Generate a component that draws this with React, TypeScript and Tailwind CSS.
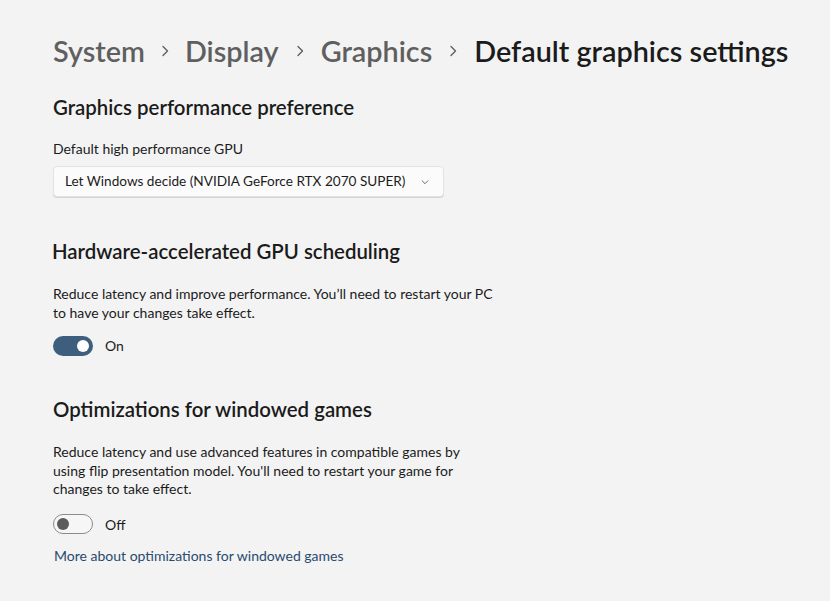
import React from "react";

const font = { fontFamily: '"Segoe UI Variable", "Segoe UI", Lato, sans-serif' };

const Chevron = ({ className }: { className?: string }) => (
  <svg viewBox="0 0 16 16" className={className} fill="none" stroke="currentColor" strokeWidth="1.4" strokeLinecap="round" strokeLinejoin="round">
    <path d="M6 3.5 10.5 8 6 12.5" />
  </svg>
);

const Toggle = ({ on }: { on: boolean }) =>
  on ? (
    <div className="flex h-5 w-10 items-center justify-end rounded-full bg-[#3d5f7d] px-1">
      <div className="h-3 w-3 rounded-full bg-white" />
    </div>
  ) : (
    <div className="flex h-5 w-10 items-center rounded-full border border-[#8b8b8b] bg-[#f6f6f6] px-[3px]">
      <div className="h-3 w-3 rounded-full bg-[#5b5b5b]" />
    </div>
  );

const App = () => {
  return (
    <div className="min-h-screen w-[830px] overflow-hidden bg-[#f3f3f3] text-[#1b1b1b]" style={font}>
      <div className="pl-[53px] pt-[30px]">
        <div className="flex items-center whitespace-nowrap text-[28.8px] font-semibold leading-[42px]">
          <span className="text-[#5f5f5f]">System</span>
          <Chevron className="mx-[12px] h-[16px] w-[16px] text-[#5f5f5f]" />
          <span className="text-[#5f5f5f]">Display</span>
          <Chevron className="mx-[13px] h-[16px] w-[16px] text-[#5f5f5f]" />
          <span className="text-[#5f5f5f]">Graphics</span>
          <Chevron className="mx-[13px] h-[16px] w-[16px] text-[#5f5f5f]" />
          <span className="text-[#1b1b1b]">Default graphics settings</span>
        </div>

        <h2 className="mt-[21px] text-[20.4px] font-semibold leading-[28px]">Graphics performance preference</h2>
        <p className="mt-[18px] text-[14px] leading-[20px]">Default high performance GPU</p>
        <button className="mt-[7px] flex h-[31px] w-[391px] items-center whitespace-nowrap rounded-[4px] border border-[#e3e3e3] bg-[#fbfbfb] pl-[11px] text-left text-[13.6px] shadow-[0_1px_0_#d4d4d4]">
          <span>Let Windows decide (NVIDIA GeForce RTX 2070 SUPER)</span>
          <svg viewBox="0 0 12 12" className="ml-[15px] h-[10px] w-[10px] text-[#5f5f5f]" fill="none" stroke="currentColor" strokeWidth="1.1" strokeLinecap="round">
            <path d="M2.5 4.5 6 8l3.5-3.5" />
          </svg>
        </button>

        <h2 className="-ml-px mt-[40px] text-[20.4px] font-semibold leading-[28px]">Hardware-accelerated GPU scheduling</h2>
        <p className="mt-[20px] w-[450px] text-[14px] leading-[18.5px]">
          Reduce latency and improve performance. You’ll need to restart your PC to have your changes take effect.
        </p>
        <div className="mt-[13px] flex items-center gap-3">
          <Toggle on />
          <span className="text-[14px]">On</span>
        </div>

        <h2 className="mt-[39px] text-[20.4px] font-semibold leading-[28px]">Optimizations for windowed games</h2>
        <p className="mt-[20px] w-[430px] text-[14px] leading-[18.5px]">
          Reduce latency and use advanced features in compatible games by using flip presentation model. You'll need to restart your game for changes to take effect.
        </p>
        <div className="mt-[15px] flex items-center gap-3">
          <Toggle on={false} />
          <span className="text-[14px]">Off</span>
        </div>
        <a className="ml-px mt-[11px] block text-[14px] leading-[20px] text-[#284b6f]">More about optimizations for windowed games</a>
      </div>
    </div>
  );
};

export default App;
